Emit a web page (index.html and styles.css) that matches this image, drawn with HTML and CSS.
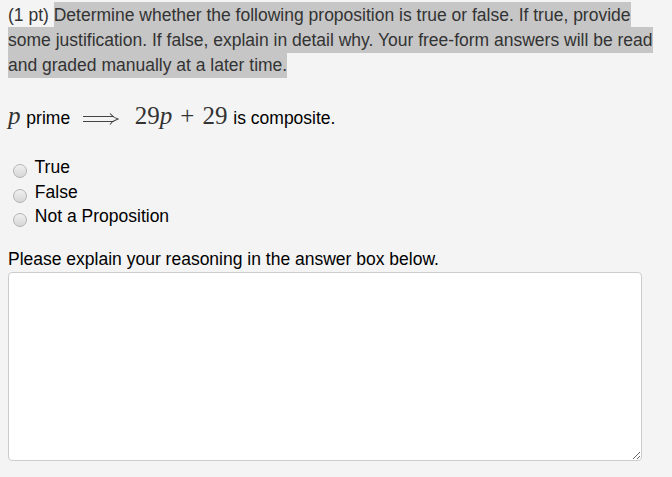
FILE: index.html
```html
<!DOCTYPE html>
<html lang="en">
<head>
  <meta charset="UTF-8" />
  <meta name="viewport" content="width=device-width, initial-scale=1.0" />
  <title>Proposition</title>
  <link rel="stylesheet" href="styles.css">
</head>
<body>
  <div class="problem">
    <p class="question">(1 pt) <span class="selected">Determine whether the following proposition is true or false. If true, provide some justification. If false, explain in detail why. Your free-form answers will be read and graded manually at a later time.</span></p>

    <p class="statement">
      <span class="math var">p</span> prime
      <svg class="arrow" width="36" height="12" viewBox="0 0 36 12">
        <path d="M0 3.5 H31 M0 8.5 H31" stroke="#444" stroke-width="1.1" fill="none"/>
        <path d="M27 0.5 Q30 4.5 35 6 Q30 7.5 27 11.5" stroke="#444" stroke-width="1.1" fill="none"/>
      </svg>
      <span class="math expr">29<span class="var">p</span><span class="op">+</span>29</span> is composite.
    </p>

    <div class="choices">
      <label class="choice"><input type="radio" name="answer" value="true"> True</label>
      <label class="choice"><input type="radio" name="answer" value="false"> False</label>
      <label class="choice"><input type="radio" name="answer" value="none"> Not a Proposition</label>
    </div>

    <p class="prompt">Please explain your reasoning in the answer box below.</p>
    <textarea class="answer-box"></textarea>
  </div>
</body>
</html>
```

FILE: styles.css
```css
html, body {
  margin: 0;
  padding: 0;
  background: #f4f4f4;
  font-family: 'Liberation Sans', Arial, sans-serif;
  font-size: 17.5px;
  color: #000;
}
.problem {
  padding: 3px 8px 0 8px;
}
.question {
  margin: 0;
  line-height: 25px;
  color: #333;
  width: 650px;
}
.selected {
  background: #c6c6c6;
  padding: 3px 0;
  -webkit-box-decoration-break: clone;
  box-decoration-break: clone;
}
.statement {
  margin: 24px 0 0 0;
  line-height: 28px;
}
.math {
  font-family: 'Liberation Serif', 'DejaVu Serif', serif;
  color: #333;
}
.var {
  font-style: italic;
}
.math.var {
  font-size: 25px;
  margin-right: 1px;
}
.arrow {
  vertical-align: -1px;
  margin: 0 11px 0 8px;
}
.expr {
  font-size: 25px;
  margin-right: 1px;
}
.op {
  margin: 0 8px;
}
.choices {
  margin-top: 23px;
  display: flex;
  flex-direction: column;
}
.choice {
  line-height: 24.5px;
}
.choice input {
  -webkit-appearance: none;
  appearance: none;
  width: 14px;
  height: 14px;
  margin: 0 3px 0 5px;
  border: 1px solid #b4b4b4;
  border-radius: 50%;
  background: linear-gradient(to bottom, #f0f0f0, #d6d6d6);
  vertical-align: -5px;
}
.prompt {
  margin: 20px 0 3px 0;
  line-height: 20px;
}
.answer-box {
  display: block;
  box-sizing: border-box;
  width: 634px;
  height: 189px;
  margin: 0;
  background: #fff;
  border: 1px solid #ccc;
  border-radius: 4px;
}
```
